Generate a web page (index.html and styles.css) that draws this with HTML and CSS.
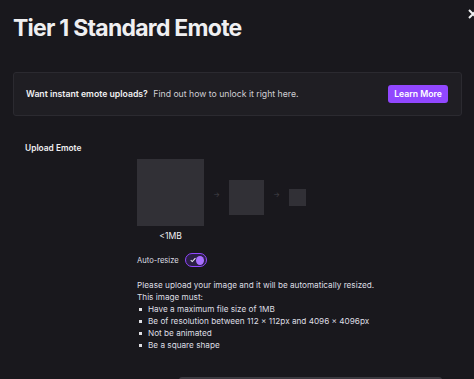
FILE: index.html
```html
<!DOCTYPE html>
<html lang="en">
<head>
  <meta charset="UTF-8" />
  <meta name="viewport" content="width=device-width, initial-scale=1" />
  <title>Tier 1 Standard Emote</title>
  <link rel="stylesheet" href="styles.css">
</head>
<body>

  <div class="page">
    <button class="close-btn" aria-label="Close">
      <svg width="10" height="10" viewBox="0 0 10 10"><path d="M1 1L9 9M9 1L1 9" stroke="#efeff1" stroke-width="2"/></svg>
    </button>

    <h1 class="title">Tier 1 Standard Emote</h1>

    <div class="banner">
      <p class="banner-text"><strong>Want instant emote uploads?</strong> Find out how to unlock it right here.</p>
      <button class="learn-btn">Learn More</button>
    </div>

    <div class="upload">
      <div class="upload-label">Upload Emote</div>
      <div class="upload-body">
        <div class="previews">
          <div class="preview-main">
            <div class="square square-lg"></div>
            <div class="size-note">&lt;1MB</div>
          </div>
          <span class="arrow">&rarr;</span>
          <div class="square square-md"></div>
          <span class="arrow">&rarr;</span>
          <div class="square square-sm"></div>
        </div>

        <div class="resize-row">
          <span>Auto-resize</span>
          <label class="toggle">
            <svg class="tick" width="7" height="6" viewBox="0 0 7 6"><path d="M0.8 3.2L2.6 4.8L6.2 0.9" fill="none" stroke="#efeff1" stroke-width="1.2"/></svg>
            <span class="knob"></span>
          </label>
        </div>

        <div class="rules">
          <p>Please upload your image and it will be automatically resized.</p>
          <p>This image must:</p>
          <ul>
            <li>Have a maximum file size of 1MB</li>
            <li>Be of resolution between 112 &times; 112px and 4096 &times; 4096px</li>
            <li>Not be animated</li>
            <li>Be a square shape</li>
          </ul>
        </div>

        <div class="upload-btn"></div>
      </div>
    </div>
  </div>

</body>
</html>
```

FILE: styles.css
```css
body {
  margin: 0;
  padding: 0;
  background-color: #19181d;
  font-family: 'Inter', 'Noto Sans', sans-serif;
  color: #dedee3;
  overflow: hidden;
}

.page {
  position: relative;
  padding: 14px 12px 0 13px;
}

.close-btn {
  position: absolute;
  top: 7px;
  right: -4px;
  background: none;
  border: none;
  padding: 0;
  cursor: pointer;
}

.title {
  margin: 0;
  font-size: 23px;
  font-weight: 700;
  letter-spacing: -0.75px;
  line-height: 28px;
  color: #efeff1;
}

.banner {
  margin-top: 30px;
  height: 44px;
  box-sizing: border-box;
  display: flex;
  align-items: center;
  justify-content: space-between;
  padding: 0 13px 0 12px;
  background-color: #1f1e23;
  border: 1px solid #2b2a30;
  border-radius: 3px;
}

.banner-text {
  margin: 0;
  font-size: 8.7px;
  color: #cfcfd4;
}
.banner-text strong {
  font-weight: 600;
  color: #efeff1;
  margin-right: 3px;
}

.learn-btn {
  height: 18px;
  padding: 0 6px;
  border: none;
  border-radius: 3px;
  background-color: #9147ff;
  color: #fff;
  font-family: inherit;
  font-size: 8.7px;
  font-weight: 600;
  cursor: pointer;
}

.upload {
  display: flex;
  margin-top: 27px;
  padding-left: 12px;
}

.upload-label {
  width: 112px;
  font-size: 8.4px;
  font-weight: 600;
  color: #efeff1;
}

.upload-body {
  padding-top: 16px;
  font-size: 8.2px;
}

.previews {
  display: flex;
  align-items: flex-start;
}

.preview-main {
  display: flex;
  flex-direction: column;
  align-items: center;
}

.square {
  background-color: #313036;
}
.square-lg { width: 67px; height: 67px; }
.square-md { width: 35px; height: 35px; margin-top: 21px; }
.square-sm { width: 17px; height: 17px; margin-top: 30px; }

.size-note {
  margin-top: 4px;
  font-size: 8.6px;
  line-height: 12px;
  color: #efeff1;
}

.arrow {
  width: 25px;
  margin-top: 31px;
  text-align: center;
  font-size: 7px;
  line-height: 10px;
  color: #45444b;
}

.resize-row {
  display: flex;
  align-items: center;
  gap: 6px;
  margin-top: 11px;
  font-size: 7.6px;
  color: #dedee3;
}

.toggle {
  position: relative;
  display: flex;
  align-items: center;
  justify-content: space-between;
  width: 22px;
  height: 14px;
  box-sizing: border-box;
  padding: 0 2px 0 4px;
  border: 1.5px solid #9147ff;
  border-radius: 8px;
  background-color: #2b1f45;
}

.knob {
  width: 9px;
  height: 9px;
  border-radius: 50%;
  background-color: #a970ff;
}

.rules {
  margin-top: 12px;
  font-size: 8.2px;
  line-height: 12.1px;
  color: #dedee3;
}
.rules p {
  margin: 0;
}
.rules ul {
  margin: 0;
  padding-left: 11px;
  list-style: none;
}
.rules li {
  position: relative;
}
.rules li::before {
  content: '';
  position: absolute;
  left: -9px;
  top: 5px;
  width: 2.5px;
  height: 2.5px;
  background-color: #dedee3;
}

.upload-btn {
  margin: 25px 0 0 42px;
  width: 263px;
  height: 20px;
  background-color: #3b3a40;
  border-radius: 3px;
}
```
